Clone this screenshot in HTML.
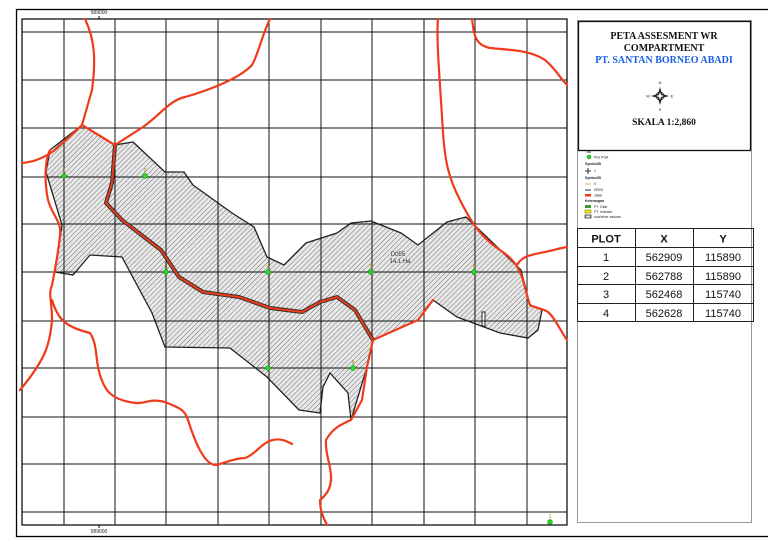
<!DOCTYPE html>
<html><head><meta charset="utf-8"><style>
html,body{margin:0;padding:0;background:#fff;width:768px;height:544px;overflow:hidden}
svg{display:block}
</style></head><body>
<svg width="768" height="544" viewBox="0 0 768 544" xmlns="http://www.w3.org/2000/svg" font-family="Liberation Sans, sans-serif">
<defs>
<pattern id="h" patternUnits="userSpaceOnUse" width="3.5" height="3.5" patternTransform="rotate(45)">
<rect width="4" height="4" fill="#e8e8e8"/><line x1="0" y1="0" x2="0" y2="4" stroke="#555" stroke-width="0.8"/>
</pattern>
</defs>
<rect x="16.5" y="9.5" width="760" height="527" fill="none" stroke="#000" stroke-width="1.3"/>
<rect x="22" y="19" width="545" height="506" fill="#fff" stroke="#000" stroke-width="1.2"/>
<path d="M82,125 L115,145 L133,142 L165,172 L184,172 L193,185 L232,213 L254,227 L267,257 L284,265 L306,243 L337,233 L351,223 L371,221 L401,233 L418,245 L447,222 L466,217 L521,270 L530,305 L542,310 L538,330 L528,338 L500,333 L484,327 L457,317 L433,300 L418,320 L373,340 L367,367 L351,420 L348,393 L330,373 L323,387 L320,413 L299,410 L267,377 L230,348 L165,347 L152,313 L122,257 L90,255 L73,275 L55,272 L62,225 L46,172 L50,150 Z" fill="url(#h)" stroke="#222" stroke-width="1.3"/>
<rect x="482" y="312" width="3" height="14" fill="#fff" stroke="#222" stroke-width="1"/>
<g stroke="#111" stroke-width="1">
<line x1="64" y1="19" x2="64" y2="525"/><line x1="115" y1="19" x2="115" y2="525"/><line x1="166" y1="19" x2="166" y2="525"/><line x1="218" y1="19" x2="218" y2="525"/><line x1="269" y1="19" x2="269" y2="525"/><line x1="321" y1="19" x2="321" y2="525"/><line x1="372" y1="19" x2="372" y2="525"/><line x1="424" y1="19" x2="424" y2="525"/><line x1="475" y1="19" x2="475" y2="525"/><line x1="527" y1="19" x2="527" y2="525"/>
<line x1="22" y1="32" x2="567" y2="32"/><line x1="22" y1="80" x2="567" y2="80"/><line x1="22" y1="128" x2="567" y2="128"/><line x1="22" y1="177" x2="567" y2="177"/><line x1="22" y1="224" x2="567" y2="224"/><line x1="22" y1="272" x2="567" y2="272"/><line x1="22" y1="321" x2="567" y2="321"/><line x1="22" y1="368" x2="567" y2="368"/><line x1="22" y1="417" x2="567" y2="417"/><line x1="22" y1="464" x2="567" y2="464"/><line x1="22" y1="512" x2="567" y2="512"/>
</g>
<g fill="none" stroke="#f03a1a" stroke-width="2.2" stroke-linecap="round" stroke-linejoin="round">
<path d="M85,19 C95,40 96,60 92,90 L82,125 L115,145"/>
<path d="M22,163 C35,162 45,157 55,150 L82,125"/>
<path d="M115,145 L143,127 C160,115 170,100 185,97 C210,90 240,78 252,65 C258,55 262,35 270,19"/>
<path d="M50,150 C45,160 44,180 48,200 C52,215 62,222 60,235 C58,255 55,270 52,285 C48,295 52,300 52,320 C50,345 45,360 20,390"/>
<path d="M52,300 C58,320 66,327 90,333 C98,345 95,360 100,375 C105,390 110,400 136,403 C145,404 150,398 165,402 C180,408 185,410 188,420 C196,445 205,465 216,465 C225,463 235,458 245,458 C255,455 262,442 273,440 C282,438 288,442 292,444"/>
<path d="M373,340 L367,367 L362,400 L351,420 C340,425 333,428 326,440 C325,455 332,467 331,480 C330,490 326,495 320,500 C320,513 325,520 327,525"/>
<path d="M373,340 L418,320 L433,300"/>
<path d="M438,19 C436,40 440,80 443,133 C445,160 448,177 460,200 C470,220 480,237 500,250 C512,258 518,265 523,280 C527,295 528,300 530,305 C535,308 542,308 548,312 C555,318 560,330 567,340"/>
<path d="M517,265 C522,256 530,255 545,252 C555,250 560,248 567,247"/>
<path d="M472,19 C474,35 475,45 490,48 C510,50 530,50 545,60 C555,68 560,78 567,85"/>
</g>
<path d="M115,145 L112,183 L106,203 L122,220 L161,250 L179,277 L203,292 L239,297 L270,308 L302,312 L320,302 L337,297 L355,310 L373,340" fill="none" stroke="#333" stroke-width="4" stroke-linejoin="round"/>
<path d="M115,145 L112,183 L106,203 L122,220 L161,250 L179,277 L203,292 L239,297 L270,308 L302,312 L320,302 L337,297 L355,310 L373,340" fill="none" stroke="#f03a1a" stroke-width="2" stroke-linejoin="round"/>
<g fill="#22dd22" stroke="#118811" stroke-width="0.6">
<circle cx="64" cy="176" r="2.4"/><circle cx="145" cy="176" r="2.4"/><circle cx="166" cy="272" r="2.4"/><circle cx="268" cy="272" r="2.4"/><circle cx="371" cy="272" r="2.4"/><circle cx="474" cy="272" r="2.4"/><circle cx="268" cy="368" r="2.4"/><circle cx="353" cy="368" r="2.4"/><circle cx="550" cy="522" r="2.4"/>
</g>
<g font-size="5" fill="#998800" text-anchor="middle">
<text x="64" y="172">1</text><text x="145" y="172">2</text><text x="166" y="268">3</text><text x="268" y="268">4</text><text x="371" y="268">5</text><text x="474" y="268">6</text><text x="268" y="364">7</text><text x="353" y="364">8</text><text x="550" y="518">1</text>
</g>
<text x="398" y="256" font-size="6" fill="#333" text-anchor="middle">D055</text>
<text x="400" y="263" font-size="6" fill="#333" text-anchor="middle">14.1 Ha</text>
<text x="99" y="14" font-size="5" fill="#222" text-anchor="middle">589000</text>
<line x1="99" y1="16" x2="99" y2="19" stroke="#000"/>
<text x="99" y="533" font-size="5" fill="#222" text-anchor="middle">589000</text>
<line x1="99" y1="525" x2="99" y2="528" stroke="#000"/>
<rect x="577.5" y="20.5" width="174" height="502" fill="#fff" stroke="#999" stroke-width="1"/>
<rect x="578.5" y="21.5" width="172" height="129" fill="#fff" stroke="#111" stroke-width="1.3"/>
<g font-family="Liberation Serif, serif" font-weight="bold" text-anchor="middle">
<text x="664" y="39" font-size="10" fill="#111">PETA ASSESMENT WR</text>
<text x="664" y="51" font-size="10" fill="#111">COMPARTMENT</text>
<text x="664" y="63" font-size="10" fill="#1a5fe0">PT. SANTAN BORNEO ABADI</text>
<text x="664" y="125" font-size="9.5" fill="#111">SKALA 1:2,860</text>
</g>
<g transform="translate(660,96)" fill="#222">
<polygon points="0,-9 2,-2 9,0 2,2 0,9 -2,2 -9,0 -2,-2"/>
<circle r="4" fill="none" stroke="#222" stroke-width="0.8"/>
<polygon points="0,-4 1,-1 4,0 1,1 0,4 -1,1 -4,0 -1,-1" fill="#fff"/>
<text y="-12" font-size="4" text-anchor="middle">N</text><text y="15" font-size="4" text-anchor="middle">S</text>
<text x="-12" y="1.5" font-size="4" text-anchor="middle">W</text><text x="12" y="1.5" font-size="4" text-anchor="middle">E</text>
</g>
<g font-size="3.5" fill="#222">
<text x="585" y="153">Titik</text>
<circle cx="589" cy="157" r="2" fill="#22dd22" stroke="#118811" stroke-width="0.5"/><text x="594" y="158.5">Plot PGA</text>
<text x="585" y="165" font-weight="bold">SymbolID</text>
<path d="M585,171 h6 M588,168 v6" stroke="#000" stroke-width="0.8"/><text x="594" y="172">1</text>
<text x="585" y="179" font-weight="bold">SymbolID</text>
<line x1="585" y1="184" x2="591" y2="184" stroke="#f0902a" stroke-width="0.8"/><text x="594" y="185">0</text>
<line x1="585" y1="190" x2="591" y2="190" stroke="#000" stroke-width="0.8"/><text x="594" y="191">DR03</text>
<rect x="585" y="194" width="6" height="2.5" fill="#f03a1a"/><text x="594" y="196.5">Jalan</text>
<text x="585" y="202" font-weight="bold">Keterangan</text>
<rect x="585" y="205" width="6" height="3" fill="#3a9a3a"/><text x="594" y="208">PT. Gilat</text>
<rect x="585" y="210" width="6" height="3" fill="#ffee00" stroke="#000" stroke-width="0.3"/><text x="594" y="213">PT. Indesim</text>
<rect x="585" y="215" width="6" height="3" fill="url(#h)" stroke="#000" stroke-width="0.6"/><text x="594" y="218">sub/other saluran</text>
</g>
<g stroke="#222" stroke-width="1" fill="none">
<rect x="577.5" y="228.5" width="176" height="93"/>
<line x1="635.5" y1="228" x2="635.5" y2="322"/><line x1="693.5" y1="228" x2="693.5" y2="322"/>
<line x1="577" y1="247.5" x2="754" y2="247.5"/><line x1="577" y1="266.5" x2="754" y2="266.5"/><line x1="577" y1="284.5" x2="754" y2="284.5"/><line x1="577" y1="303.5" x2="754" y2="303.5"/>
</g>
<g font-family="Liberation Sans, sans-serif" font-size="11" fill="#111" text-anchor="middle">
<text x="606" y="242.5" font-weight="bold">PLOT</text><text x="664" y="242.5" font-weight="bold">X</text><text x="723" y="242.5" font-weight="bold">Y</text>
<text x="606" y="261">1</text><text x="664" y="261">562909</text><text x="723" y="261">115890</text>
<text x="606" y="280">2</text><text x="664" y="280">562788</text><text x="723" y="280">115890</text>
<text x="606" y="298">3</text><text x="664" y="298">562468</text><text x="723" y="298">115740</text>
<text x="606" y="317">4</text><text x="664" y="317">562628</text><text x="723" y="317">115740</text>
</g>
</svg>
</body></html>
